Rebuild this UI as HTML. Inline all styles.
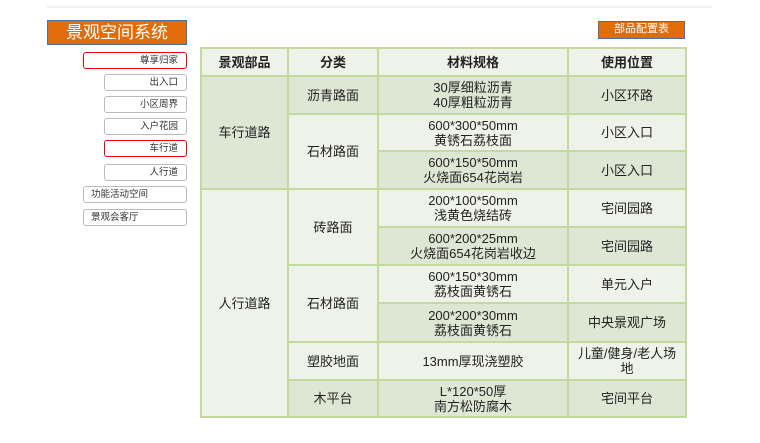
<!DOCTYPE html>
<html><head><meta charset="utf-8"><style>
*{margin:0;padding:0;box-sizing:border-box}
body{width:760px;height:443px;background:#fff;position:relative;overflow:hidden;font-family:"Liberation Sans","Noto Sans CJK SC",sans-serif;color:#222}
.line{position:absolute;left:47px;top:6px;width:665px;height:2px;background:#f2f2f2}
.title{position:absolute;left:47px;top:20px;width:140px;height:25px;background:#e36c0a;border:1px solid #4f6fa0;color:#fff;font-size:17px;line-height:23px;text-align:center}
.cfg{position:absolute;left:598px;top:21px;width:87px;height:18px;background:#e36c0a;border:1.5px solid #4f6fa0;color:#fff;font-size:11px;line-height:15px;text-align:center}
.b{position:absolute;height:17px;border:1.5px solid #bbb;border-radius:3px;font-size:9.5px;line-height:10px;text-align:right;padding:3px 8px 0 0;background:#fff;color:#333}
.r{border-color:#e00}
.l{text-align:left;padding-left:7px}
table{position:absolute;left:200px;top:47px;width:485px;table-layout:fixed;border-collapse:collapse;font-size:13px;line-height:15px;text-align:center}
td{border:2px solid #c3d99e;background:#eef2e8;padding:0}
.d{background:#dee7d3}
th{border:2px solid #c3d99e;background:#eef2e8;font-weight:bold;height:28px;font-size:13px}
</style></head><body>
<div class="line"></div>
<div class="title">景观空间系统</div>
<div class="cfg">部品配置表</div>
<div class="b r" style="left:83px;top:52px;width:104px">尊享归家</div>
<div class="b" style="left:104px;top:74px;width:83px">出入口</div>
<div class="b" style="left:104px;top:96px;width:83px">小区周界</div>
<div class="b" style="left:104px;top:118px;width:83px">入户花园</div>
<div class="b r" style="left:104px;top:140px;width:83px">车行道</div>
<div class="b" style="left:104px;top:164px;width:83px">人行道</div>
<div class="b l" style="left:83px;top:186px;width:104px">功能活动空间</div>
<div class="b l" style="left:83px;top:209px;width:104px">景观会客厅</div>
<table>
<colgroup><col style="width:87px"><col style="width:90px"><col style="width:190px"><col style="width:118px"></colgroup>
<tr><th>景观部品</th><th>分类</th><th>材料规格</th><th>使用位置</th></tr>
<tr style="height:38px"><td class="d" rowspan="3">车行道路</td><td class="d">沥青路面</td><td class="d">30厚细粒沥青<br>40厚粗粒沥青</td><td class="d">小区环路</td></tr>
<tr style="height:37px"><td rowspan="2">石材路面</td><td>600*300*50mm<br>黄锈石荔枝面</td><td>小区入口</td></tr>
<tr style="height:38px"><td class="d">600*150*50mm<br>火烧面654花岗岩</td><td class="d">小区入口</td></tr>
<tr style="height:38px"><td rowspan="6">人行道路</td><td rowspan="2">砖路面</td><td>200*100*50mm<br>浅黄色烧结砖</td><td>宅间园路</td></tr>
<tr style="height:38px"><td class="d">600*200*25mm<br>火烧面654花岗岩收边</td><td class="d">宅间园路</td></tr>
<tr style="height:38px"><td rowspan="2">石材路面</td><td>600*150*30mm<br>荔枝面黄锈石</td><td>单元入户</td></tr>
<tr style="height:39px"><td class="d">200*200*30mm<br>荔枝面黄锈石</td><td class="d">中央景观广场</td></tr>
<tr style="height:38px"><td>塑胶地面</td><td>13mm厚现浇塑胶</td><td>儿童/健身/老人场<br>地</td></tr>
<tr style="height:37px"><td class="d">木平台</td><td class="d">L*120*50厚<br>南方松防腐木</td><td class="d">宅间平台</td></tr>
</table>
</body></html>
